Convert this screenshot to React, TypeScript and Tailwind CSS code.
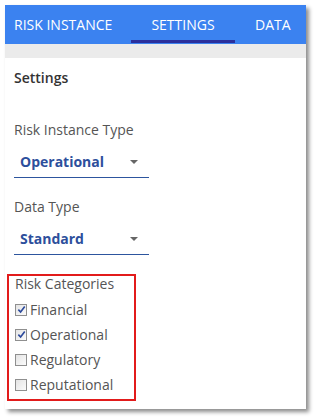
type CategoryItem = { label: string; checked: boolean };

const categories: CategoryItem[] = [
  { label: "Financial", checked: true },
  { label: "Operational", checked: true },
  { label: "Regulatory", checked: false },
  { label: "Reputational", checked: false },
];

function Checkbox({ checked }: { checked: boolean }) {
  return (
    <span className="flex h-[12px] w-[12px] shrink-0 items-center justify-center border border-[#8f8f8f] bg-gradient-to-br from-[#e4e4e4] to-[#fbfbfb]">
      {checked ? (
        <svg viewBox="0 0 10 10" className="h-[9px] w-[9px]">
          <path d="M1.5 5.2 L4 7.8 L8.6 1.6" fill="none" stroke="#2c4a9c" strokeWidth="1.8" />
        </svg>
      ) : null}
    </span>
  );
}

function SelectField({ label, value }: { label: string; value: string }) {
  return (
    <div className="flex flex-col">
      <p className="text-[14px] leading-[20px] text-[#555555]">{label}</p>
      <div className="mt-[12px] flex w-[135px] items-center justify-between border-b-[1.5px] border-[#2d559e] pb-[5px] pl-[6px] pr-[11px]">
        <span className="text-[14px] font-bold leading-[20px] text-[#2d4f9c]">{value}</span>
        <span className="h-0 w-0 border-x-[4px] border-t-[4px] border-x-transparent border-t-[#666666]" />
      </div>
    </div>
  );
}

export default function App() {
  return (
    <div className="h-[419px] w-[315px] bg-white pl-[5px] pt-[5px] font-['Open_Sans',sans-serif]">
      <div className="flex h-[404px] w-[301px] flex-col bg-white shadow-[3px_3px_4px_rgba(0,0,0,0.45)]">
        <div className="flex h-[39px] shrink-0 items-stretch bg-[#3b82f0] text-[14px] text-white">
          <div className="flex w-[126px] items-center pl-[9px]">RISK INSTANCE</div>
          <div className="relative flex w-[104px] items-center justify-center">
            SETTINGS
            <span className="absolute bottom-[1px] left-0 h-[3px] w-full bg-[#2a2f9c]" />
          </div>
          <div className="flex items-center pl-[20px]">DATA</div>
        </div>
        <div className="h-[14px] shrink-0 bg-[#ebebeb]" />
        <div className="flex flex-1 flex-col px-[9px] pt-[10px]">
          <h2 className="text-[14px] font-semibold leading-[20px] text-[#333333]">Settings</h2>
          <div className="mt-[32px]">
            <SelectField label="Risk Instance Type" value="Operational" />
          </div>
          <div className="mt-[19px]">
            <SelectField label="Data Type" value="Standard" />
          </div>
          <div className="-ml-[7px] mt-[19px] flex w-[129px] flex-col border-2 border-[#e21b1b] pb-[2px] pl-[6px]">
            <p className="text-[14px] leading-[16px] text-[#555555]">Risk Categories</p>
            <div className="mt-[5px] flex flex-col">
              {categories.map((c) => (
                <label key={c.label} className="flex h-[25px] items-center gap-[3px] text-[14px] text-[#555555]">
                  <Checkbox checked={c.checked} />
                  {c.label}
                </label>
              ))}
            </div>
          </div>
        </div>
      </div>
    </div>
  );
}
